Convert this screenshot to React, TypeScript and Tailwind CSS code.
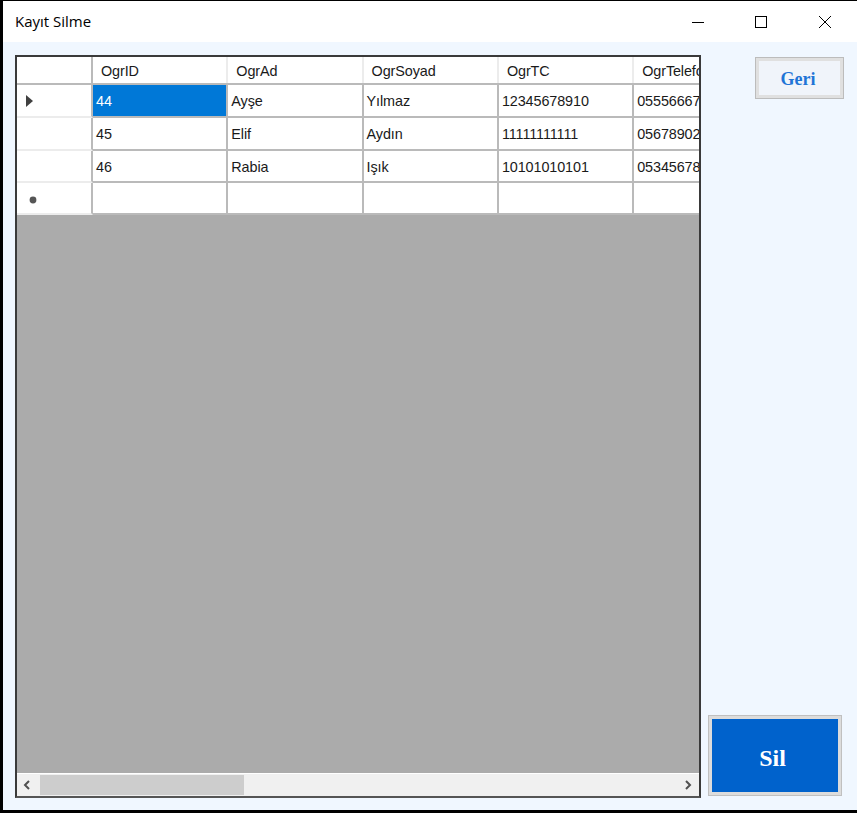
import React from "react";

const cell = "font-['Liberation_Sans',sans-serif] text-[14.4px] tracking-[-0.1px] leading-none";
const cols = ["OgrID", "OgrAd", "OgrSoyad", "OgrTC", "OgrTelefon"];
const rows: string[][] = [
  ["44", "Ayşe", "Yılmaz", "12345678910", "05556667788"],
  ["45", "Elif", "Aydın", "11111111111", "05678902345"],
  ["46", "Rabia", "Işık", "10101010101", "05345678912"],
  ["", "", "", "", ""],
];
const heights = ["h-[33px]", "h-[33px]", "h-[32px]", "h-[32px]"];

export default function App() {
  return (
    <div className="w-[857px] h-[813px] bg-black pl-[3px] pt-[1px] pb-[3px] overflow-hidden">
      <div className="h-full flex flex-col bg-[#f0f7ff]">
        <div className="h-[41px] bg-white flex items-center shrink-0">
          <span className="ml-[12px] font-['Open_Sans',sans-serif] text-[15px] text-black">Kayıt Silme</span>
          <div className="ml-auto flex items-center text-black">
            <svg width="64" height="20" viewBox="0 0 64 20" fill="none" stroke="#000" strokeWidth="1"><path d="M27 10.5h12" /></svg>
            <svg width="64" height="20" viewBox="0 0 64 20" fill="none" stroke="#000" strokeWidth="1"><rect x="26.5" y="4.5" width="11" height="11" /></svg>
            <svg width="64" height="20" viewBox="0 0 64 20" fill="none" stroke="#000" strokeWidth="1"><path d="M26 4l12 12M38 4L26 16" /></svg>
          </div>
        </div>
        <div className="flex-1 flex min-h-0 pl-[12px] pt-[13px] pb-[12px]">
          <div className="w-[686px] border-2 border-[#3a3a3a] border-b-[#555] flex flex-col bg-[#ababab] overflow-hidden">
            <div className="flex h-[28px] bg-white shrink-0 border-b-2 border-[#bababa]">
              <div className="w-[76px] shrink-0 border-r-2 border-[#bababa]" />
              {cols.map((c) => (
                <div key={c} className={`${cell} w-[135.3px] shrink-0 border-r-2 border-[#ececec] pl-[8px] pt-[7px] text-[#1a1a1a] overflow-hidden whitespace-nowrap`}>{c}</div>
              ))}
            </div>
            {rows.map((r, i) => (
              <div key={i} className={`flex ${heights[i]} shrink-0`}>
                <div className="w-[76px] shrink-0 bg-white border-r-2 border-b-2 border-r-[#bababa] border-b-[#ececec] flex items-center">
                  {i === 0 && (
                    <svg width="8" height="12" viewBox="0 0 8 12" className="ml-[9px]"><path d="M0 0l7 6-7 6z" fill="#404040" /></svg>
                  )}
                  {i === 3 && (
                    <svg width="8" height="8" viewBox="0 0 8 8" className="ml-[12px] mt-[4px]"><circle cx="4" cy="4" r="3.4" fill="#555" /></svg>
                  )}
                </div>
                {r.map((v, j) => (
                  <div
                    key={j}
                    className={`${cell} w-[135.3px] shrink-0 border-r-2 border-b-2 border-[#bababa] pl-[3px] pt-[9px] overflow-hidden whitespace-nowrap ${i === 0 && j === 0 ? "bg-[#0078d7] text-white" : "bg-white text-[#1a1a1a]"}`}
                  >
                    {v}
                  </div>
                ))}
              </div>
            ))}
            <div className="flex-1" />
            <div className="h-[23px] shrink-0 bg-[#f0f0f0] border-t border-white flex items-center">
              <svg width="23" height="12" viewBox="0 0 23 12" fill="none" stroke="#505050" strokeWidth="2" className="shrink-0"><path d="M12 2L8 6l4 4" /></svg>
              <div className="w-[204px] h-[20px] bg-[#cdcdcd] shrink-0" />
              <svg width="22" height="12" viewBox="0 0 22 12" fill="none" stroke="#505050" strokeWidth="2" className="ml-auto shrink-0"><path d="M9 2l4 4-4 4" /></svg>
            </div>
          </div>
          <div className="flex-1 flex flex-col items-start pl-[7px] pt-[2px] pb-[2px]">
            <button className="ml-[47px] w-[89px] h-[42px] border border-[#bcbcbc] bg-[#f0f4fa] font-['Liberation_Serif',serif] font-bold text-[18px] text-[#1f74d6] pt-[2px] pr-[3px] flex items-center justify-center shadow-[inset_0_0_0_3px_#e0e0e0]">
              Geri
            </button>
            <button className="mt-auto w-[134px] h-[81px] border border-[#c0c0c0] bg-[#0062cc] font-['Liberation_Serif',serif] font-bold text-[24px] text-white pr-[5px] pt-[4px] flex items-center justify-center shadow-[inset_0_0_0_3px_#dcdcdc]">
              Sil
            </button>
          </div>
        </div>
      </div>
    </div>
  );
}
